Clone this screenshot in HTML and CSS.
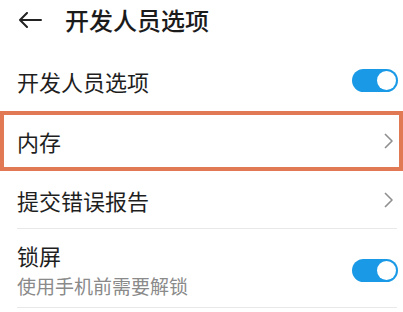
FILE: index.html
```html
<!DOCTYPE html>
<html lang="zh-CN">
<head>
<meta charset="utf-8">
<link rel="stylesheet" href="styles.css">
</head>
<body>
<div class="page">
  <header class="header">
    <svg class="back" width="24" height="16" viewBox="0 0 24 16"><path d="M23 8H2M9 1L2 8l7 7" fill="none" stroke="#222" stroke-width="2" stroke-linecap="round" stroke-linejoin="round"/></svg>
    <span class="title">开发人员选项</span>
  </header>
  <div class="list">
    <div class="row row-top">
      <span class="label">开发人员选项</span>
      <span class="toggle"><span class="thumb"></span></span>
    </div>
    <div class="row row-box">
      <span class="label">内存</span>
      <svg class="chev" width="9" height="16" viewBox="0 0 9 16"><path d="M1 1l7 7-7 7" fill="none" stroke="#8f8f8f" stroke-width="1.6" stroke-linejoin="round"/></svg>
    </div>
    <div class="row row-report">
      <span class="label">提交错误报告</span>
      <svg class="chev" width="9" height="16" viewBox="0 0 9 16"><path d="M1 1l7 7-7 7" fill="none" stroke="#8f8f8f" stroke-width="1.6" stroke-linejoin="round"/></svg>
    </div>
    <div class="row row-lock">
      <div class="texts">
        <span class="label">锁屏</span>
        <span class="sub">使用手机前需要解锁</span>
      </div>
      <span class="toggle"><span class="thumb"></span></span>
    </div>
  </div>
</div>
</body>
</html>
```
FILE: styles.css
```css
html, body {
  margin: 0;
  padding: 0;
  background: #fff;
}
body {
  font-family: "Noto Sans CJK SC", "Noto Sans", sans-serif;
  color: #1e1e1e;
}
.page {
  width: 403px;
  height: 312px;
  overflow: hidden;
}
.header {
  height: 40px;
  display: flex;
  align-items: center;
  padding-left: 18px;
  gap: 23px;
}
.back {
  display: block;
  flex: none;
}
.title {
  font-size: 24px;
  line-height: 30px;
  font-weight: 500;
  color: #1b1b1b;
}
.list {
  margin-top: 10px;
}
.row {
  display: flex;
  align-items: center;
  justify-content: space-between;
  box-sizing: border-box;
}
.label {
  font-size: 22px;
  line-height: 28px;
  color: #1e1e1e;
}
.row-top {
  height: 61px;
  padding: 0 5px 0 17px;
}
.row-box {
  height: 60px;
  border: 4px solid #e07954;
  padding: 0 6px 0 13px;
}
.row-report {
  height: 58px;
  margin: 0 6px 0 17px;
  border-bottom: 1px solid #e8e8e8;
  padding-right: 4px;
}
.chev {
  display: block;
  flex: none;
}
.row-lock {
  height: 79px;
  margin: 0 6px 0 17px;
  border-bottom: 1px solid #e8e8e8;
  padding-top: 4px;
}
.texts {
  display: flex;
  flex-direction: column;
  gap: 4px;
}
.sub {
  font-size: 19px;
  line-height: 26px;
  color: #8a8a8a;
}
.toggle {
  flex: none;
  width: 46px;
  height: 23px;
  border-radius: 12px;
  background: #1a9ae6;
  display: flex;
  align-items: center;
  justify-content: flex-end;
  padding-right: 2px;
  box-sizing: border-box;
}
.row-lock .toggle {
  margin-right: -1px;
}
.thumb {
  width: 19px;
  height: 19px;
  border-radius: 50%;
  background: #fff;
}
```
